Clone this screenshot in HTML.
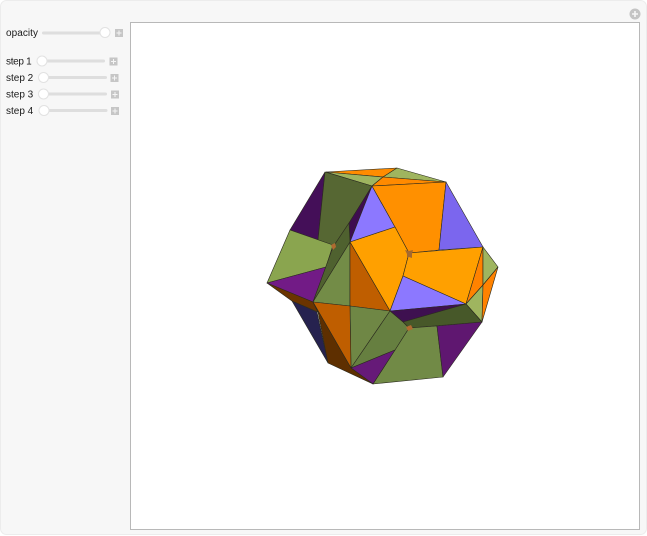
<!DOCTYPE html>
<html><head><meta charset="utf-8">
<style>
html,body{margin:0;padding:0;background:#fff;width:647px;height:536px;overflow:hidden}
svg{display:block}
text{font-family:"Liberation Sans",Arial,sans-serif;font-size:10px;fill:#1a1a1a}
.f polygon{stroke:#2a2a1e;stroke-width:.6;stroke-linejoin:round}
</style></head><body>
<svg width="647" height="536" viewBox="0 0 647 536" xmlns="http://www.w3.org/2000/svg">
<rect x="0.5" y="0.5" width="646" height="534" rx="6" fill="#f7f7f7" stroke="#ececec"/>
<rect x="130.5" y="22.5" width="509" height="507" fill="#fff" stroke="#b8b8b8"/>
<circle cx="635" cy="14" r="5.5" fill="#c4c4c4"/>
<path d="M635 11v6M632 14h6" stroke="#f7f7f7" stroke-width="1.6"/>

<text x="6" y="36" textLength="32">opacity</text>
<rect x="42" y="31.500" width="67" height="3" rx="1.500" fill="#dedede"/>
<circle cx="105" cy="32.500" r="5" fill="#fff" stroke="#e2e2e2"/>
<rect x="115" y="29" width="8" height="8" fill="#c6c6c6"/><path d="M119 30.500v5M116.500 33h5" stroke="#f5f5f5"/>

<text x="6" y="64.500" textLength="25.700">step 1</text>
<rect x="42" y="59.500" width="63" height="3" rx="1.500" fill="#dedede"/>
<circle cx="42" cy="61" r="5" fill="#fff" stroke="#e2e2e2"/>
<rect x="109.500" y="57.500" width="8" height="8" fill="#c6c6c6"/><path d="M113.500 59v5M111 61.500h5" stroke="#f5f5f5"/>

<text x="6" y="81">step 2</text>
<rect x="43" y="76" width="64" height="3" rx="1.500" fill="#dedede"/>
<circle cx="43.500" cy="77.500" r="5" fill="#fff" stroke="#e2e2e2"/>
<rect x="110.500" y="74" width="8" height="8" fill="#c6c6c6"/><path d="M114.500 75.500v5M112 78h5" stroke="#f5f5f5"/>

<text x="6" y="97.500">step 3</text>
<rect x="43" y="92.500" width="64" height="3" rx="1.500" fill="#dedede"/>
<circle cx="43.500" cy="94" r="5" fill="#fff" stroke="#e2e2e2"/>
<rect x="111" y="90.500" width="8" height="8" fill="#c6c6c6"/><path d="M115 92v5M112.500 94.500h5" stroke="#f5f5f5"/>

<text x="6" y="114">step 4</text>
<rect x="44" y="109" width="63.500" height="3" rx="1.500" fill="#dedede"/>
<circle cx="44" cy="110.500" r="5" fill="#fff" stroke="#e2e2e2"/>
<rect x="111" y="107" width="8" height="8" fill="#c6c6c6"/><path d="M115 108.500v5M112.500 111h5" stroke="#f5f5f5"/>

<g class="f">
<!-- top -->
<polygon fill="#ff8c00" points="326,172 397,168 383,177"/>
<polygon fill="#9fb55f" points="326,172 383,177 372,186"/>
<polygon fill="#9fb55f" points="397,168 446,182 383,177"/>
<polygon fill="#ff8a00" points="383,177 446,182 372,186"/>
<!-- upper left -->
<polygon fill="#440f58" points="325,172 290,230 318,240"/>
<polygon fill="#566733" points="325,172 372,186 349,223 333,247 318,240"/>
<polygon fill="#8aa54f" points="290,230 333,245 326,267 267,283"/>
<polygon fill="#721b86" points="267,283 326,267 313,302"/>
<polygon fill="#3e0d50" points="372,186 350,242 349,223"/>
<!-- upper center -->
<polygon fill="#8c78ff" points="372,186 350,242 395,227"/>
<polygon fill="#ff9000" points="372,186 446,182 439,250 409,253 395,227"/>
<polygon fill="#7b66ee" points="446,182 483,247 439,250"/>
<polygon fill="#ffa000" points="350,242 395,227 409,253 403,276 390,311"/>
<polygon fill="#ffa000" points="409,253 483,247 466,304 403,276"/>
<polygon fill="#8c78ff" points="403,276 466,304 390,311"/>
<!-- right -->
<polygon fill="#ff8200" points="483,247 483,285 466,304"/>
<polygon fill="#9fb55f" points="483,247 498,267 483,285"/>
<polygon fill="#9fb55f" points="483,285 466,304 482,322"/>
<polygon fill="#ff8200" points="498,267 483,285 482,322"/>
<!-- center -->
<polygon fill="#4f612f" points="349,223 350,242 313,302 333,247"/>
<polygon fill="#738c47" points="350,242 350,306 313,302"/>
<polygon fill="#bf5e00" points="350,242 390,311 350,306"/>
<polygon fill="#3e1050" points="390,311 466,304 403,322"/>
<polygon fill="#475829" points="403,322 466,304 482,322 409,328"/>
<!-- bottom -->
<polygon fill="#718a46" points="409,328 437,326 443,377 373,384 395,350"/>
<polygon fill="#5f1770" points="437,326 482,322 443,377"/>
<polygon fill="#6f8745" points="350,306 390,311 351,368"/>
<polygon fill="#667f40" points="390,311 403,322 409,328 395,350 351,368"/>
<polygon fill="#661a78" points="351,368 395,350 373,384"/>
<polygon fill="#26224f" points="292,301 317,312 328,363"/>
<polygon fill="#6b3400" points="267,283 313,302 318,312 292,301"/>
<polygon fill="#bf5e00" points="313,302 350,306 351,368"/>
<polygon fill="#5e2f00" points="313,302 351,368 373,384 328,363 318,312"/>
</g>
<!-- markers -->
<polygon points="405,250 409,251 413,250 412,254 412,258 409,257 407,258 407,254" fill="#a4692f"/>
<polygon points="331,245 335,243 336,247 333,250" fill="#b06a30"/>
<polygon points="406,327 411,325 413,329 408,331" fill="#b06a30"/>
</svg>
</body></html>
